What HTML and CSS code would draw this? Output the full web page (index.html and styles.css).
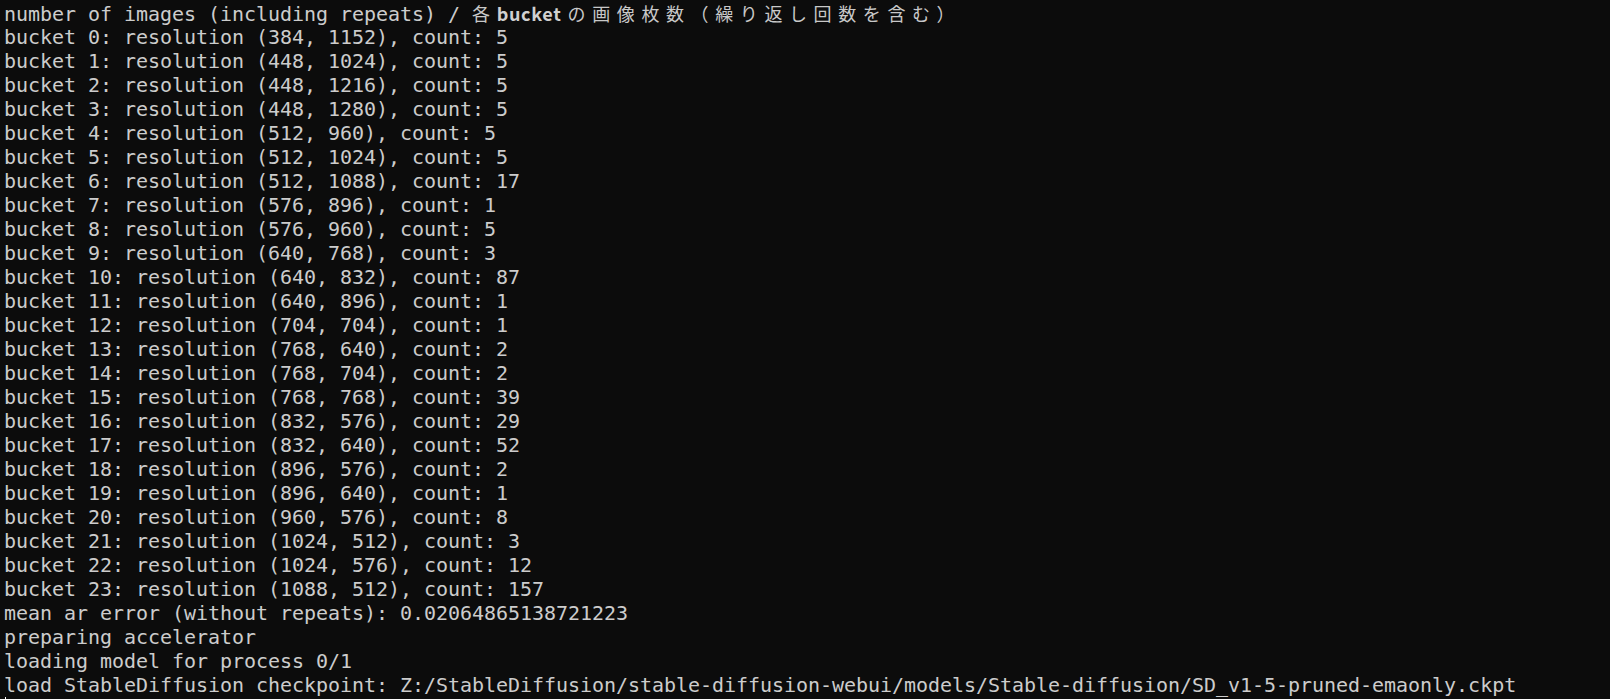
FILE: index.html
```html
<!DOCTYPE html>
<html lang="ja">
<head>
<meta charset="utf-8">
<title>Terminal</title>
<link rel="stylesheet" href="styles.css">
</head>
<body>
<main class="terminal">
<div class="line">number of images (including repeats) / <span class="jp"><span class="cjk">各</span><span class="latin">bucket</span><span class="cjk">の画像枚数（繰り返し回数を含む）</span></span></div>
<div class="line">bucket 0: resolution (384, 1152), count: 5</div>
<div class="line">bucket 1: resolution (448, 1024), count: 5</div>
<div class="line">bucket 2: resolution (448, 1216), count: 5</div>
<div class="line">bucket 3: resolution (448, 1280), count: 5</div>
<div class="line">bucket 4: resolution (512, 960), count: 5</div>
<div class="line">bucket 5: resolution (512, 1024), count: 5</div>
<div class="line">bucket 6: resolution (512, 1088), count: 17</div>
<div class="line">bucket 7: resolution (576, 896), count: 1</div>
<div class="line">bucket 8: resolution (576, 960), count: 5</div>
<div class="line">bucket 9: resolution (640, 768), count: 3</div>
<div class="line">bucket 10: resolution (640, 832), count: 87</div>
<div class="line">bucket 11: resolution (640, 896), count: 1</div>
<div class="line">bucket 12: resolution (704, 704), count: 1</div>
<div class="line">bucket 13: resolution (768, 640), count: 2</div>
<div class="line">bucket 14: resolution (768, 704), count: 2</div>
<div class="line">bucket 15: resolution (768, 768), count: 39</div>
<div class="line">bucket 16: resolution (832, 576), count: 29</div>
<div class="line">bucket 17: resolution (832, 640), count: 52</div>
<div class="line">bucket 18: resolution (896, 576), count: 2</div>
<div class="line">bucket 19: resolution (896, 640), count: 1</div>
<div class="line">bucket 20: resolution (960, 576), count: 8</div>
<div class="line">bucket 21: resolution (1024, 512), count: 3</div>
<div class="line">bucket 22: resolution (1024, 576), count: 12</div>
<div class="line">bucket 23: resolution (1088, 512), count: 157</div>
<div class="line">mean ar error (without repeats): 0.02064865138721223</div>
<div class="line">preparing accelerator</div>
<div class="line">loading model for process 0/1</div>
<div class="line">load StableDiffusion checkpoint: Z:/StableDiffusion/stable-diffusion-webui/models/Stable-diffusion/SD_v1-5-pruned-emaonly.ckpt</div>
<div class="line"><span class="cursor"></span></div>
</main>
</body>
</html>
```
FILE: styles.css
```css
html, body {
  margin: 0;
  padding: 0;
  background: #0c0c0c;
  overflow: hidden;
}
.terminal {
  box-sizing: border-box;
  width: 1610px;
  height: 699px;
  padding: 1px 0 0 4px;
  background: #0c0c0c;
  color: #cccccc;
  font-family: "DejaVu Sans Mono", "Liberation Mono", monospace;
  font-size: 20px;
  letter-spacing: -0.04px;
  line-height: 24px;
  overflow: hidden;
}
.line {
  height: 24px;
  white-space: pre;
}
.jp {
  font-family: "Noto Sans CJK JP", sans-serif;
  font-size: 18px;
  color: #c8c8c8;
}
.cjk {
  letter-spacing: 6.6px;
}
.latin {
  font-weight: 600;
  letter-spacing: 0.7px;
  margin-right: 6px;
  color: #d0d0d0;
}
.cursor {
  display: inline-block;
  width: 1px;
  height: 24px;
  margin-left: 1px;
  background: #ffffff;
  vertical-align: top;
}
```
